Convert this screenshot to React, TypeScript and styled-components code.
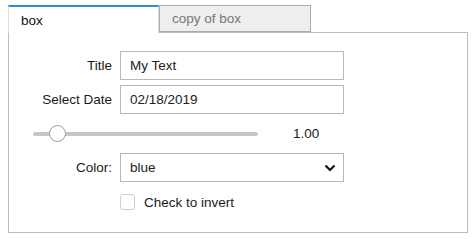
import styled, { createGlobalStyle } from "styled-components";

const GlobalStyle = createGlobalStyle`
  html, body {
    margin: 0;
    padding: 0;
    background: #ffffff;
  }
  body {
    padding: 5px 6px 0 8px;
    font-family: "Liberation Sans", Arial, Helvetica, sans-serif;
    font-size: 13.5px;
    color: #1a1a1a;
  }
`;

const Widget = styled.div`
  width: 460px;
`;

const TabBar = styled.div`
  display: flex;
  height: 27px;
`;

const Tab = styled.div<{ $active?: boolean }>`
  box-sizing: border-box;
  width: ${(p) => (p.$active ? 151 : 152)}px;
  height: ${(p) => (p.$active ? 28 : 27)}px;
  padding: 0 12px;
  display: flex;
  align-items: center;
  background: ${(p) => (p.$active ? "#ffffff" : "#eeeeee")};
  color: ${(p) => (p.$active ? "#111111" : "#777777")};
  border: 1px solid ${(p) => (p.$active ? "#dcdcdc" : "#ababab")};
  border-top: ${(p) => (p.$active ? "2px solid #2a8fd6" : "1px solid #ababab")};
  border-bottom: ${(p) => (p.$active ? "none" : "1px solid #ababab")};
  position: relative;
  z-index: ${(p) => (p.$active ? 1 : 0)};
`;

const Panel = styled.div`
  box-sizing: border-box;
  height: 201px;
  border: 1px solid #bdbdbd;
  padding-top: 18px;
`;

const Row = styled.div<{ $gap?: number }>`
  display: flex;
  align-items: center;
  margin-bottom: ${(p) => p.$gap ?? 5}px;
`;

const Label = styled.label`
  width: 103px;
  margin-right: 8px;
  text-align: right;
  flex-shrink: 0;
`;

const TextInput = styled.div`
  box-sizing: border-box;
  width: 224px;
  height: 29px;
  border: 1px solid #b8b8b8;
  padding: 0 9px;
  display: flex;
  align-items: center;
  color: #222222;
`;

const SliderRow = styled.div`
  display: flex;
  align-items: center;
  height: 39px;
  padding-left: 24px;
`;

const Track = styled.div`
  position: relative;
  width: 225px;
  height: 4px;
  background: #c6c6c6;
  border-radius: 2px;
`;

const Thumb = styled.div`
  position: absolute;
  left: 16px;
  top: -7px;
  box-sizing: border-box;
  width: 17px;
  height: 17px;
  border-radius: 50%;
  background: #ffffff;
  border: 1px solid #9a9a9a;
`;

const Value = styled.span`
  margin-left: 35px;
`;

const Select = styled(TextInput)`
  justify-content: space-between;
  padding-right: 7px;
`;

const CheckRow = styled.div`
  display: flex;
  align-items: center;
  margin-top: 12px;
  padding-left: 111px;
`;

const Box = styled.div`
  box-sizing: border-box;
  width: 15px;
  height: 16px;
  border: 1px solid #cfcfcf;
  border-radius: 3px;
  margin-right: 9px;
`;

const Chevron = () => (
  <svg width="12" height="8" viewBox="0 0 12 8">
    <path d="M1.5 1.5 L6 6 L10.5 1.5" fill="none" stroke="#111" strokeWidth="2.2" />
  </svg>
);

export default function App() {
  return (
    <>
      <GlobalStyle />
      <Widget>
        <TabBar>
          <Tab $active>box</Tab>
          <Tab>copy of box</Tab>
        </TabBar>
        <Panel>
          <Row>
            <Label>Title</Label>
            <TextInput>My Text</TextInput>
          </Row>
          <Row $gap={0}>
            <Label>Select Date</Label>
            <TextInput>02/18/2019</TextInput>
          </Row>
          <SliderRow>
            <Track>
              <Thumb />
            </Track>
            <Value>1.00</Value>
          </SliderRow>
          <Row $gap={0}>
            <Label>Color:</Label>
            <Select>
              <span>blue</span>
              <Chevron />
            </Select>
          </Row>
          <CheckRow>
            <Box />
            <span>Check to invert</span>
          </CheckRow>
        </Panel>
      </Widget>
    </>
  );
}
